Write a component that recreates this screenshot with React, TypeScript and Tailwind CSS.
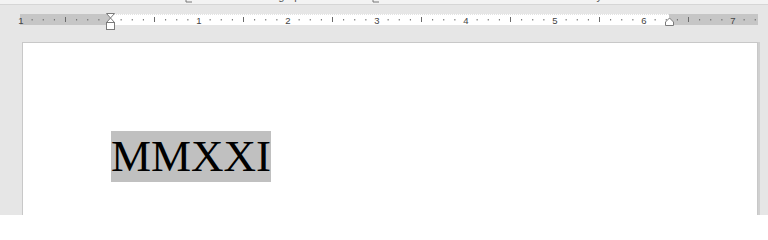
const INCH = 89;
const ZERO = 110;

const Ruler = () => {
  const marks: JSX.Element[] = [];
  for (let i = -8; i <= 8 * 7 + 2; i++) {
    const x = ZERO + (i * INCH) / 8;
    if (x < 21 || x > 757) continue;
    if (i % 8 === 0) {
      if (i === 0) continue;
      marks.push(
        <text
          key={i}
          x={x}
          y={18.5}
          textAnchor="middle"
          fontSize="9.5"
          fill="#444"
          fontFamily="'Liberation Sans', Arial, sans-serif"
        >
          {Math.abs(i / 8)}
        </text>
      );
    } else if (i % 4 === 0) {
      marks.push(<rect key={i} x={x - 0.5} y={12} width={1} height={5} fill="#6a6a6a" />);
    } else {
      marks.push(<rect key={i} x={x - 0.5} y={14} width={1} height={1.5} fill="#6a6a6a" />);
    }
  }
  return (
    <svg width="768" height="27" className="block">
      <rect x={20} y={9} width={738} height={11} fill="#c6c6c6" />
      <rect x={110} y={9} width={559} height={11} fill="#ffffff" />
      <line x1={110} y1={9.5} x2={669} y2={9.5} stroke="#e2e2e2" strokeDasharray="1 1" />
      {marks}
      {/* left indent markers */}
      <path d="M106.5 8.5 L114.5 8.5 L110.5 13 Z" fill="#fff" stroke="#7a7a7a" />
      <path d="M110.5 13 L114.5 17.5 L106.5 17.5 Z" fill="#fff" stroke="#7a7a7a" />
      <rect x={106.5} y={17.5} width={8} height={7} fill="#fff" stroke="#7a7a7a" />
      {/* right indent marker */}
      <path d="M665.5 20.5 L665.5 17 L669.5 13 L673.5 17 L673.5 20.5 Z" fill="#fff" stroke="#7a7a7a" />
    </svg>
  );
};

const Launcher = () => (
  <svg width="8" height="4" viewBox="0 0 8 4" className="block">
    <path d="M1 0 V3 H7" fill="none" stroke="#777" />
  </svg>
);

export default function App() {
  return (
    <div className="w-[768px] h-[215px] overflow-hidden bg-[#e6e6e6] font-['Liberation_Sans',Arial,sans-serif]">
      {/* bottom edge of the ribbon, group labels cut off as in the screenshot */}
      <div className="h-[5px] bg-[#f3f3f3] border-b border-[#d6d6d6] overflow-hidden flex items-end text-[11px] leading-[11px] text-[#555]">
        <span className="ml-[65px] mb-[1px] translate-y-[-1px] w-[120px]">Font</span>
        <span className="mb-[1px] w-[70px]"><Launcher /></span>
        <span className="mb-[1px] translate-y-[-1px] w-[117px]">Paragraph</span>
        <span className="mb-[1px] w-[214px]"><Launcher /></span>
        <span className="mb-[1px] translate-y-[-1px]">Styles</span>
      </div>
      <Ruler />
      <div className="ml-[22px] mt-[10px] w-[736px] h-[200px] bg-white border border-[#c8c8c8] shadow-[2px_0_0_#d0d0d0] pt-[88px] pl-[88px]">
        <span className="inline-block bg-[#c0c0c0] text-black text-[45px] leading-[51px] font-['Liberation_Serif','Times_New_Roman',serif]">
          MMXXI
        </span>
      </div>
    </div>
  );
}
